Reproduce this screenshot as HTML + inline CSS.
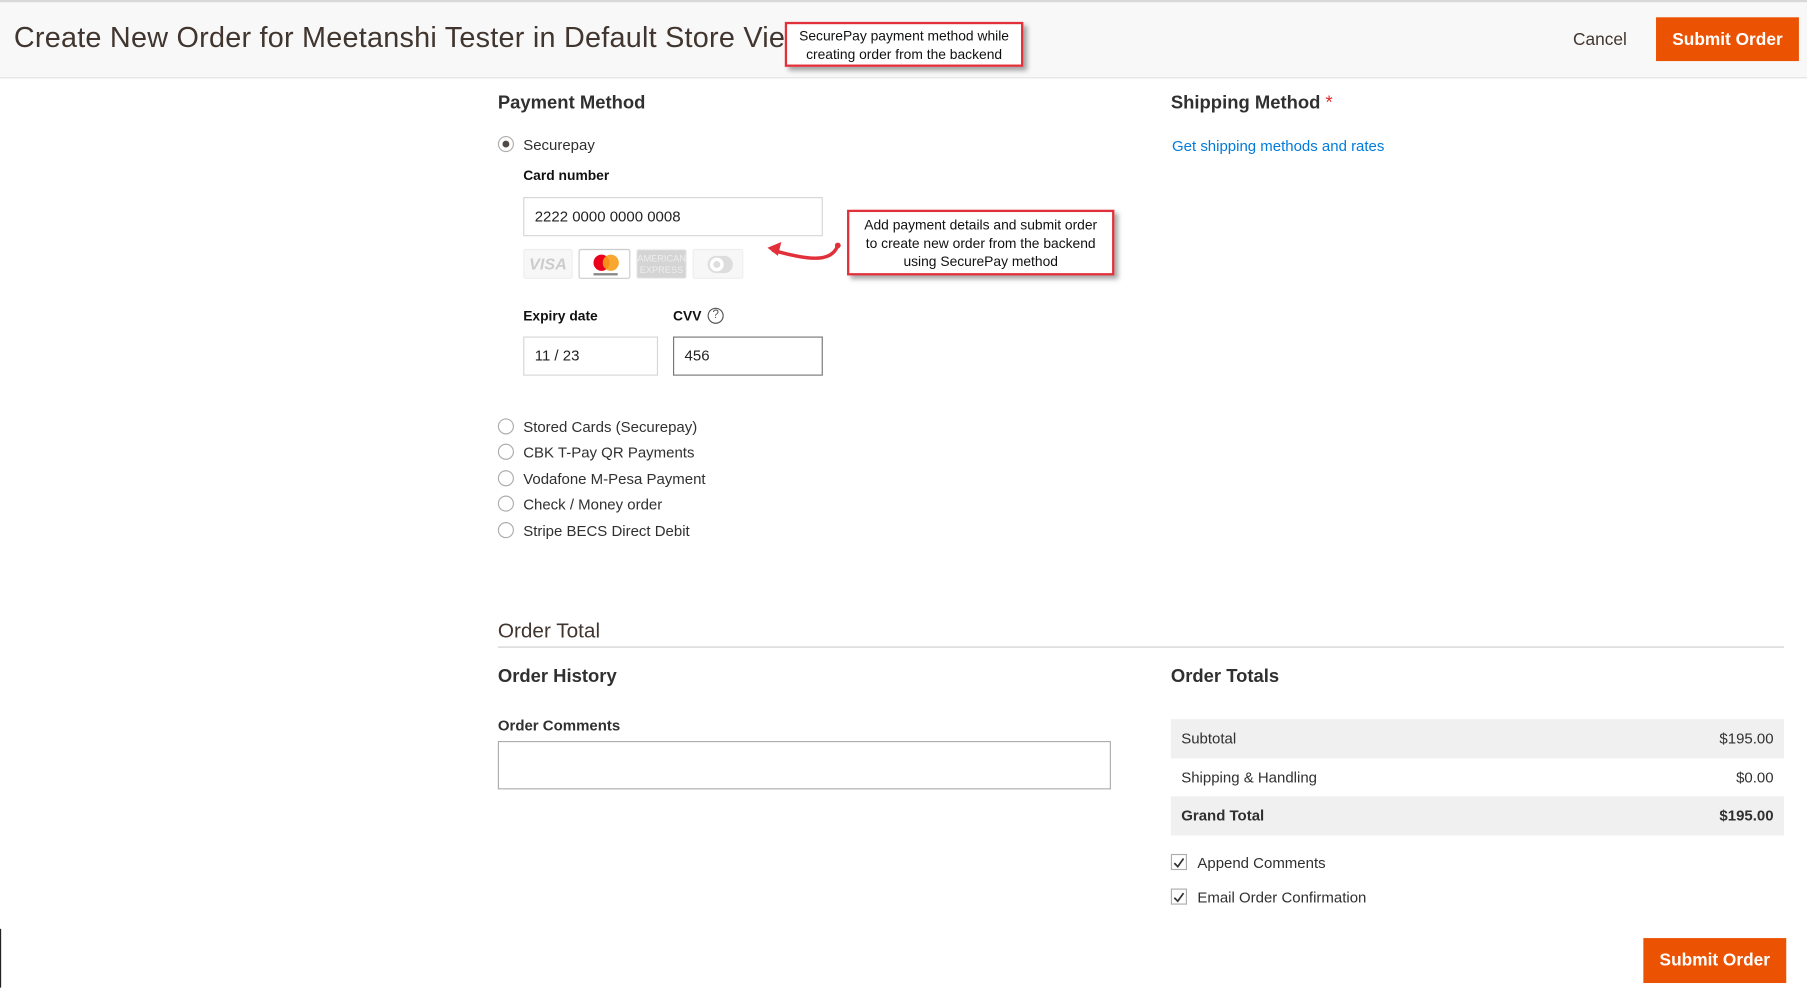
<!DOCTYPE html>
<html><head><meta charset="utf-8"><style>
html,body{margin:0;padding:0;background:#fff;overflow:hidden}
body{width:1807px;height:988px;position:relative}
#w{position:absolute;left:0;top:0;width:1568px;height:857px;transform:scale(1.15242);transform-origin:0 0;font-family:"Liberation Sans",sans-serif;color:#303030}
.a{position:absolute;white-space:nowrap}
.radio{position:absolute;width:12px;height:12px;border:1px solid #adadad;border-radius:50%;background:#fff}
.inp{position:absolute;border:1px solid #d6d6d6;background:#fff;font-size:13px;box-sizing:border-box;padding-left:9px;line-height:32px;color:#222}
.call{position:absolute;border:2px solid #e2303a;background:#fff;font-size:12px;line-height:16px;text-align:center;color:#111;box-shadow:3px 3px 4px rgba(0,0,0,.35);box-sizing:border-box}
.card{position:absolute;top:216px;height:26px;border:1px solid #eee;border-radius:2px;box-sizing:border-box;background:#f7f7f7}
.row{position:absolute;left:1016px;width:532px;height:34px;font-size:13px;line-height:34px}
.row span{position:absolute}
.cb{position:absolute;width:12px;height:12px;border:1px solid #adadad;background:#fff;left:1016px}
.btn{position:absolute;background:#eb5202;color:#fff;font-weight:bold;font-size:15px;text-align:center}
</style></head><body><div id="w">
<div class="a" style="left:0;top:0;width:1568px;height:2px;background:#d8d8d8"></div>
<div class="a" style="left:0;top:2px;width:1568px;height:65px;background:#f8f8f8;border-bottom:1px solid #e3e3e3"></div>
<div class="a" style="left:12px;top:19px;font-size:25px;color:#41362f;letter-spacing:0.2px">Create New Order for Meetanshi Tester in Default Store Vie</div>
<div class="call" style="left:681px;top:19px;width:207px;height:39px;padding-top:2px">SecurePay payment method while<br>creating order from the backend</div>
<div class="a" style="left:1365px;top:26px;font-size:15px;color:#41362f">Cancel</div>
<div class="btn" style="left:1437px;top:15px;width:124px;height:38px;line-height:39px">Submit Order</div>

<div class="a" style="left:432px;top:81px;font-size:16px;font-weight:bold;color:#303030">Payment Method</div>
<div class="radio" style="left:432px;top:118px"><div style="position:absolute;left:3px;top:3px;width:6px;height:6px;border-radius:50%;background:#514943"></div></div>
<div class="a" style="left:454px;top:118px;font-size:13px">Securepay</div>
<div class="a" style="left:454px;top:145px;font-size:12px;font-weight:bold;color:#111">Card number</div>
<div class="inp" style="left:454px;top:171px;width:260px;height:34px">2222 0000 0000 0008</div>
<div class="card" style="left:454px;width:43px;font:italic bold 14px 'Liberation Sans',sans-serif;color:#ccc;text-align:center;line-height:24px">VISA</div>
<div class="card" style="left:502px;width:45px;background:#fff;border-color:#ccc"><svg width="45" height="26"><circle cx="19" cy="11" r="7" fill="#eb001b"/><circle cx="27" cy="11" r="7" fill="#f79e1b" opacity=".9"/><rect x="12" y="20" width="21" height="2" fill="#888"/></svg></div>
<div class="card" style="left:552px;width:44px;background:#d4d4d4;color:#eee;font-size:8px;line-height:10px;text-align:center;padding-top:3px">AMERICAN<br>EXPRESS</div>
<div class="card" style="left:601px;width:44px"><svg width="44" height="26"><rect x="12" y="5" width="22" height="15" rx="7.5" fill="#ddd"/><circle cx="20" cy="12.5" r="6" fill="#fff"/><circle cx="20" cy="12.5" r="3" fill="#ddd"/></svg></div>
<svg class="a" style="left:660px;top:205px" width="80" height="30"><path d="M67 8 C62 22 45 22 10 12" fill="none" stroke="#e2303a" stroke-width="3"/><path d="M6 10 L18 5 L15 17 Z" fill="#e2303a"/><circle cx="67" cy="8" r="2.5" fill="#e2303a"/></svg>
<div class="call" style="left:735px;top:182px;width:232px;height:57px;padding-top:3px">Add payment details and submit order<br>to create new order from the backend<br>using SecurePay method</div>
<div class="a" style="left:454px;top:267px;font-size:12px;font-weight:bold;color:#111">Expiry date</div>
<div class="a" style="left:584px;top:267px;font-size:12px;font-weight:bold;color:#111">CVV</div>
<div class="a" style="left:614px;top:267px;width:12px;height:12px;border:1px solid #555;border-radius:50%;font-size:10px;text-align:center;line-height:12px;color:#555">?</div>
<div class="inp" style="left:454px;top:292px;width:117px;height:34px">11 / 23</div>
<div class="inp" style="left:584px;top:292px;width:130px;height:34px;border:1px solid #777">456</div>

<div class="radio" style="left:432px;top:363px"></div><div class="a" style="left:454px;top:363px;font-size:13px">Stored Cards (Securepay)</div>
<div class="radio" style="left:432px;top:385px"></div><div class="a" style="left:454px;top:385px;font-size:13px">CBK T-Pay QR Payments</div>
<div class="radio" style="left:432px;top:408px"></div><div class="a" style="left:454px;top:408px;font-size:13px">Vodafone M-Pesa Payment</div>
<div class="radio" style="left:432px;top:430px"></div><div class="a" style="left:454px;top:430px;font-size:13px">Check / Money order</div>
<div class="radio" style="left:432px;top:453px"></div><div class="a" style="left:454px;top:453px;font-size:13px">Stripe BECS Direct Debit</div>

<div class="a" style="left:1016px;top:81px;font-size:16px;font-weight:bold">Shipping Method <span style="color:#e22626;font-weight:normal">*</span></div>
<div class="a" style="left:1017px;top:119px;font-size:13px;color:#007bdb">Get shipping methods and rates</div>

<div class="a" style="left:432px;top:537px;font-size:18px;color:#41362f">Order Total</div>
<div class="a" style="left:432px;top:561px;width:1116px;height:1px;background:#ccc"></div>
<div class="a" style="left:432px;top:579px;font-size:16px;font-weight:bold">Order History</div>
<div class="a" style="left:1016px;top:579px;font-size:16px;font-weight:bold">Order Totals</div>
<div class="a" style="left:432px;top:622px;font-size:13px;font-weight:bold">Order Comments</div>
<div class="a" style="left:432px;top:643px;width:530px;height:40px;border:1px solid #adadad"></div>

<div class="row" style="top:624px;background:#f0f0f0"><span style="left:9px">Subtotal</span><span style="right:9px">$195.00</span></div>
<div class="row" style="top:658px"><span style="left:9px">Shipping &amp; Handling</span><span style="right:9px">$0.00</span></div>
<div class="row" style="top:691px;background:#f0f0f0;font-weight:bold"><span style="left:9px">Grand Total</span><span style="right:9px">$195.00</span></div>
<div class="cb" style="top:741px"><svg width="12" height="12"><path d="M2 6 L5 9 L10 2" fill="none" stroke="#333" stroke-width="1.5"/></svg></div>
<div class="a" style="left:1039px;top:741px;font-size:13px">Append Comments</div>
<div class="cb" style="top:771px"><svg width="12" height="12"><path d="M2 6 L5 9 L10 2" fill="none" stroke="#333" stroke-width="1.5"/></svg></div>
<div class="a" style="left:1039px;top:771px;font-size:13px">Email Order Confirmation</div>
<div class="btn" style="left:1426px;top:814px;width:124px;height:39px;line-height:40px">Submit Order</div>
<div class="a" style="left:0;top:806px;width:1px;height:51px;background:#222"></div>
</div></body></html>
